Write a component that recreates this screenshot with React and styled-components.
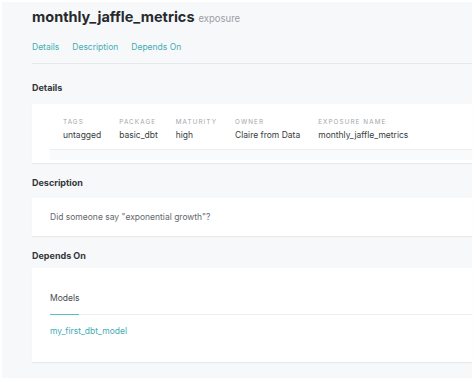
import React from "react";
import styled, { createGlobalStyle } from "styled-components";

const Global = createGlobalStyle`
  body {
    margin: 0;
    background: #fff;
    font-family: Inter, "Noto Sans", sans-serif;
  }
`;

const Frame = styled.div`
  padding: 2px 2px 4px 2px;
  background: #fff;
`;

const Page = styled.div`
  background: #f7f8fa;
  padding: 5px 0 16px 30px;
`;

const Title = styled.h1`
  margin: 0;
  font-size: 14.5px;
  font-weight: 700;
  color: #262a2e;
  line-height: 20px;
`;

const Kind = styled.span`
  font-size: 9.5px;
  font-weight: 400;
  color: #9a9ea3;
  margin-left: 4px;
`;

const Tabs = styled.nav`
  display: flex;
  gap: 13px;
  padding: 12px 0 10px;
  border-bottom: 1px solid #e6e8eb;
`;

const Tab = styled.a`
  font-size: 8.5px;
  color: #45adb5;
  line-height: 12px;
`;

const Section = styled.section`
  margin-top: ${(p) => p.$top}px;
`;

const Heading = styled.h3`
  margin: 0 0 ${(p) => p.$gap || 10}px;
  font-size: 9px;
  font-weight: 700;
  color: #33373b;
  line-height: 12px;
`;

const Card = styled.div`
  background: #fff;
  box-shadow: 0 1px 1px rgba(0, 0, 0, 0.06);
  padding: ${(p) => p.$pad};
`;

const Table = styled.div`
  display: flex;
  gap: 18px;
  padding: 14px 0 8px 13px;
  border-bottom: 1px solid #eceef0;
`;

const Foot = styled.div`
  height: 10px;
  background: #f9fafb;
`;

const Col = styled.div`
  display: flex;
  flex-direction: column;
  gap: 3px;
`;

const Label = styled.div`
  font-size: 6.3px;
  letter-spacing: 1.1px;
  text-transform: uppercase;
  color: #a2a6ab;
  line-height: 8px;
  white-space: nowrap;
`;

const Value = styled.div`
  font-size: 8.5px;
  color: #383c40;
  line-height: 12px;
  white-space: nowrap;
`;

const Text = styled.p`
  margin: 0;
  font-size: 8.5px;
  color: #62676c;
  line-height: 12px;
`;

const SubTabs = styled.div`
  display: flex;
  border-bottom: 1px solid #eceef0;
`;

const SubTab = styled.div`
  font-size: 8.5px;
  color: #474b50;
  line-height: 12px;
  padding-bottom: 10px;
  border-bottom: 1px solid #5bbcc2;
  margin-bottom: -1px;
`;

const Link = styled.a`
  display: block;
  margin-top: 10px;
  font-size: 8.5px;
  color: #45adb5;
  line-height: 12px;
`;

const details = [
  ["Tags", "untagged"],
  ["Package", "basic_dbt"],
  ["Maturity", "high"],
  ["Owner", "Claire from Data"],
  ["Exposure Name", "monthly_jaffle_metrics"],
];

export default function App() {
  return (
    <Frame>
      <Global />
      <Page>
        <header>
          <Title>
            monthly_jaffle_metrics<Kind>exposure</Kind>
          </Title>
          <Tabs>
            <Tab>Details</Tab>
            <Tab>Description</Tab>
            <Tab>Depends On</Tab>
          </Tabs>
        </header>

        <Section $top={18}>
          <Heading>Details</Heading>
          <Card $pad="0 0 3px 18px">
            <Table>
              {details.map(([k, v]) => (
                <Col key={k}>
                  <Label>{k}</Label>
                  <Value>{v}</Value>
                </Col>
              ))}
            </Table>
            <Foot />
          </Card>
        </Section>

        <Section $top={14}>
          <Heading $gap={9}>Description</Heading>
          <Card $pad="13px 18px">
            <Text>Did someone say "exponential growth"?</Text>
          </Card>
        </Section>

        <Section $top={14}>
          <Heading $gap={6}>Depends On</Heading>
          <Card $pad="24px 0 25px 18px">
            <SubTabs>
              <SubTab>Models</SubTab>
            </SubTabs>
            <Link>my_first_dbt_model</Link>
          </Card>
        </Section>
      </Page>
    </Frame>
  );
}
